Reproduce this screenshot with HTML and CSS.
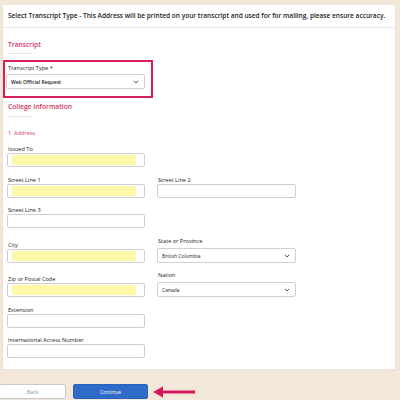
FILE: index.html
```html
<!DOCTYPE html>
<html>
<head>
<meta charset="utf-8">
<link rel="stylesheet" href="styles.css">
</head>
<body>
<div class="page">
  <div class="card">
    <div class="card-head">Select Transcript Type - This Address will be printed on your transcript and used for for mailing, please ensure accuracy.</div>
    <div class="card-body">
      <h2 class="section">Transcript</h2>
      <div class="rule"></div>
      <div class="highlight">
        <label class="lbl">Transcript Type *</label>
        <div class="select bold">Web Official Request
          <svg class="chev" viewBox="0 0 6 4" width="6" height="4"><polyline points="0.8,0.8 3,3 5.2,0.8" fill="none" stroke="#555" stroke-width="1"/></svg>
        </div>
      </div>
      <h2 class="section sec2">College Information</h2>
      <div class="rule rule2"></div>
      <h3 class="sub">1. Address</h3>
      <div class="grid">
        <div class="field c1"><label class="lbl">Issued To</label><div class="input"><span class="fill"></span></div></div>
        <div class="field c1"><label class="lbl">Street Line 1</label><div class="input"><span class="fill"></span></div></div>
        <div class="field c2"><label class="lbl">Street Line 2</label><div class="input"></div></div>
        <div class="field c1"><label class="lbl">Street Line 3</label><div class="input"></div></div>
        <div class="field c1"><label class="lbl">City</label><div class="input"><span class="fill"></span></div></div>
        <div class="field c2"><label class="lbl gap">State or Province</label><div class="select">British Columbia
          <svg class="chev" viewBox="0 0 6 4" width="6" height="4"><polyline points="0.8,0.8 3,3 5.2,0.8" fill="none" stroke="#555" stroke-width="1"/></svg></div></div>
        <div class="field c1"><label class="lbl">Zip or Postal Code</label><div class="input"><span class="fill"></span></div></div>
        <div class="field c2"><label class="lbl gap">Nation</label><div class="select">Canada
          <svg class="chev" viewBox="0 0 6 4" width="6" height="4"><polyline points="0.8,0.8 3,3 5.2,0.8" fill="none" stroke="#555" stroke-width="1"/></svg></div></div>
        <div class="field c1"><label class="lbl">Extension</label><div class="input"></div></div>
        <div class="field c1"><label class="lbl">International Access Number</label><div class="input"></div></div>
      </div>
    </div>
  </div>
  <div class="actions">
    <button class="btn back">Back</button>
    <button class="btn primary">Continue</button>
    <svg class="arrow" viewBox="0 0 42 12" width="42" height="12">
      <polygon points="0,6 10,0.5 10,4.5 42,4.5 42,7.5 10,7.5 10,11.5" fill="#d4175c"/>
    </svg>
  </div>
</div>
</body>
</html>
```

FILE: styles.css
```css
* { box-sizing: border-box; }
html, body { margin: 0; padding: 0; }
body {
  background: #f3e7da;
  font-family: "Open Sans", "Liberation Sans", sans-serif;
  color: #222;
  width: 400px;
  height: 400px;
  overflow: hidden;
}
.page { padding-top: 4px; }
.card {
  margin-left: 2px;
  width: 394px;
  background: #fff;
  border: 1px solid #e9e1d8;
  border-top-color: #efe6dc;
}
.card-head {
  height: 23px;
  line-height: 22px;
  padding: 0 5px;
  font-size: 6.55px;
  font-weight: 600;
  color: #222;
  border-bottom: 1px solid #e6e6e6;
  white-space: nowrap;
}
.card-body { padding: 0 5px 11px 5px; }
.section {
  margin: 12px 0 0 0;
  font-size: 6.7px;
  line-height: 10px;
  font-weight: 600;
  color: #cf3a64;
}
.sec2 { margin-top: 4px; }
.rule {
  margin-top: 3px;
  width: 24px;
  height: 1px;
  background: #e3e3e3;
}
.rule2 { margin-top: 4px; }
.highlight {
  margin: 6px 0 0 -5px;
  width: 150px;
  border: 2px solid #d81e5b;
  padding: 2px 6px 7px 1px;
}
.highlight .lbl { margin-left: 2px; margin-bottom: 2px; }
.lbl {
  display: block;
  font-size: 5.6px;
  line-height: 8px;
  color: #222;
}
.lbl.gap { margin-bottom: 3px; }
.select {
  position: relative;
  height: 15px;
  line-height: 14px;
  border: 1px solid #d0d0d0;
  border-radius: 2px;
  padding-left: 4px;
  font-size: 5px;
  color: #222;
  background: #fff;
}
.select.bold { font-weight: 600; }
.chev {
  position: absolute;
  right: 5px;
  top: 5px;
}
.sub {
  margin: 12px 0 0 0;
  font-size: 5.6px;
  line-height: 8px;
  font-weight: 400;
  color: #cf3a64;
}
.grid {
  margin: 8px 0 0 -1px;
  display: grid;
  grid-template-columns: 138px 139px;
  column-gap: 12px;
  row-gap: 8.5px;
  align-items: end;
}
.c1 { grid-column: 1; }
.c2 { grid-column: 2; }
.field { display: flex; flex-direction: column; }
.field .lbl { margin-left: 1px; }
.input {
  height: 14px;
  border: 1px solid #cfcfcf;
  border-radius: 2px;
  background: #fff;
  padding: 1px 8px 1px 4px;
}
.fill {
  display: block;
  height: 100%;
  background: #fff8a8;
}
.actions {
  margin-top: 14px;
  display: flex;
  align-items: center;
}
.btn {
  height: 15px;
  font-family: inherit;
  font-size: 5px;
  padding: 0;
  border-radius: 2px;
}
.back {
  width: 67px;
  margin-left: -1px;
  background: #fff;
  border: 1px solid #c9c9c9;
  color: #7d8fb3;
}
.primary {
  width: 75px;
  margin-left: 7px;
  background: #2f6bc8;
  border: 1px solid #2a62b8;
  color: #fff;
}
.arrow { margin-left: 5px; }
```
